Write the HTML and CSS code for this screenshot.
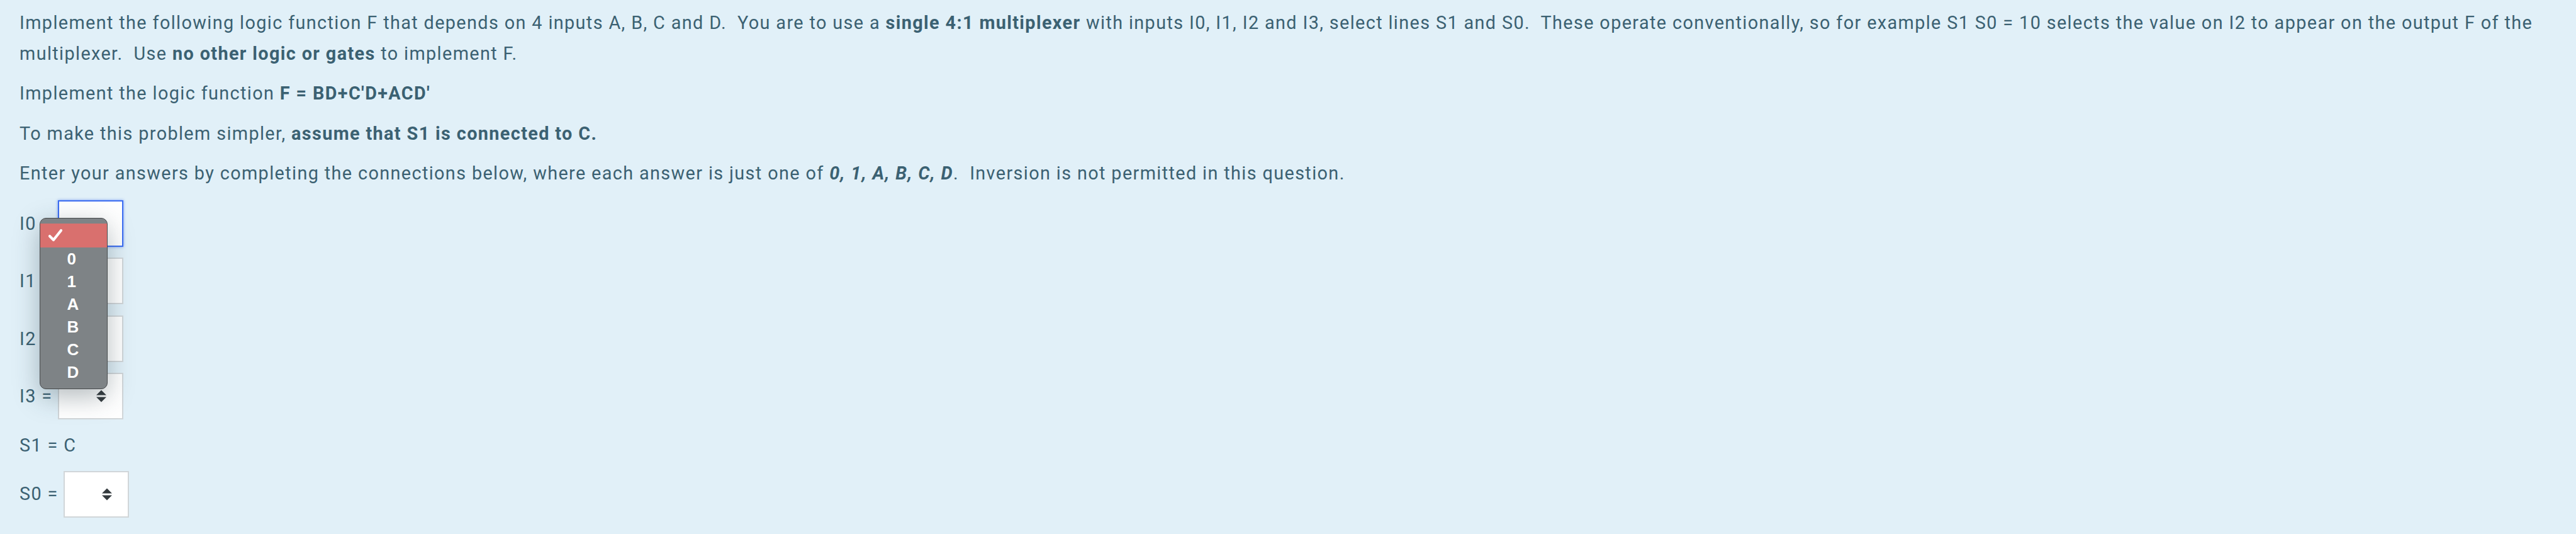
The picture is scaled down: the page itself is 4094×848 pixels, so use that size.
FILE: index.html
```html
<!DOCTYPE html>
<html lang="en">
<head>
    <meta charset="UTF-8">
    <title>Multiplexer question</title>
    <link rel="stylesheet" href="styles.css">
</head>
<body>
    <div class="question">
        <p>Implement the following logic function F that depends on 4 inputs A, B, C and D.&nbsp; You are to use a <b>single 4:1 multiplexer</b> with inputs I0, I1, I2 and I3, select lines S1 and S0.&nbsp; These operate conventionally, so for example S1 S0 = 10 selects the value on I2 to appear on the output F of the multiplexer.&nbsp; Use <b>no other logic or gates</b> to implement F.</p>
        <p>Implement the logic function <b>F = BD+C'D+ACD'</b></p>
        <p>To make this problem simpler, <b>assume that S1 is connected to C.</b></p>
        <p>Enter your answers by completing the connections below, where each answer is just one of <b><i>0, 1, A, B, C, D</i></b>.&nbsp; Inversion is not permitted in this question.</p>

        <div class="answers">
            <div class="row">I0 = <span class="choice focused"></span></div>
            <div class="row">I1 = <span class="choice"></span></div>
            <div class="row">I2 = <span class="choice"></span></div>
            <div class="row">I3 = <span class="choice"><svg class="arrows" width="16" height="20" viewBox="0 0 16 20"><path d="M0 8.5 L8 0.5 L16 8.5 Z M0 11.5 L16 11.5 L8 19.5 Z" fill="#343a3e"/></svg></span></div>
            <div class="row text-row">S1 = C</div>
            <div class="row">S0 = <span class="choice"><svg class="arrows" width="16" height="20" viewBox="0 0 16 20"><path d="M0 8.5 L8 0.5 L16 8.5 Z M0 11.5 L16 11.5 L8 19.5 Z" fill="#343a3e"/></svg></span></div>

            <!-- open native select menu for I0 -->
            <div class="menu">
                <div class="menu-item selected"><svg class="tick" width="24" height="22" viewBox="0 0 24 22"><path d="M3 12 L9 18 L21 3" fill="none" stroke="#fff" stroke-width="4.2" stroke-linecap="round" stroke-linejoin="round"/></svg></div>
                <div class="menu-item">0</div>
                <div class="menu-item">1</div>
                <div class="menu-item">A</div>
                <div class="menu-item">B</div>
                <div class="menu-item">C</div>
                <div class="menu-item">D</div>
            </div>
        </div>
    </div>
</body>
</html>
```

FILE: styles.css
```css
body {
    margin: 0;
    background: #e1f0f8;
    font-family: Roboto, "Liberation Sans", sans-serif;
    font-size: 28.8px;
    line-height: 48.6px;
    letter-spacing: 1.38px;
    color: #3b6172;
}

.question {
    padding: 12px 31px 0 31px;
}

p {
    margin: 0 0 15px 0;
}

b {
    font-weight: bold;
}

.answers {
    position: relative;
    padding-top: 3px;
}

.row {
    display: flex;
    align-items: center;
    white-space: pre;
    margin-bottom: 17.5px;
}

.text-row {
    height: 48.6px;
    margin-top: -1px;
    margin-bottom: 16px;
}

.choice {
    display: inline-flex;
    align-items: center;
    justify-content: flex-end;
    box-sizing: border-box;
    width: 104px;
    height: 74px;
    padding-right: 25px;
    background: #fff;
    border: 2px solid #d1d6d9;
}

.choice.focused {
    border: 2px solid #3d6ef2;
    box-shadow: 0 0 4px rgba(61, 110, 242, 0.7);
}

.menu {
    position: absolute;
    left: 32px;
    top: 31px;
    width: 108px;
    height: 272px;
    box-sizing: border-box;
    padding: 8px 0;
    background: #7e8386;
    border: 1.5px solid #474a4c;
    border-radius: 10px;
    box-shadow: 0 12px 40px rgba(40, 60, 70, 0.35);
    font-family: "Liberation Sans", Arial, sans-serif;
    font-weight: bold;
    font-size: 26px;
    line-height: 36px;
    letter-spacing: 0;
    color: #fff;
}

.menu-item {
    height: 36px;
    padding-left: 42.5px;
}

.menu-item.selected {
    height: 38px;
    background: #d9706e;
    padding-left: 12px;
    display: flex;
    align-items: center;
}
```
